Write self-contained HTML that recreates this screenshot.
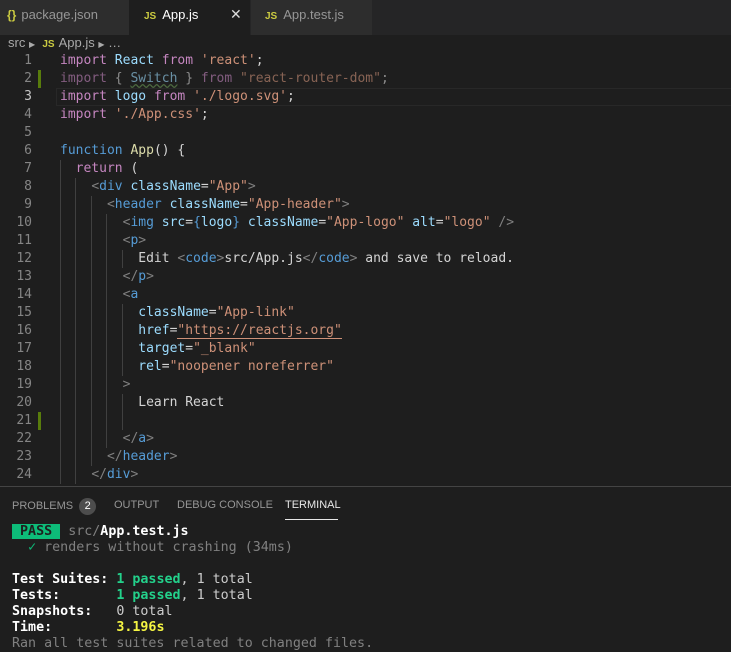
<!DOCTYPE html>
<html><head><style>
body{margin:0;width:731px;height:647px;background:#1e1e1e;overflow:hidden;position:relative;font-family:"Liberation Sans",sans-serif}
.tabs{position:absolute;left:0;top:0;width:731px;height:35px;background:#252526}
.tab{position:absolute;top:0;height:35px;background:#2d2d2d;color:#969696;font-size:13px;line-height:29px;box-sizing:border-box}
.js{color:#cbcb41;font-weight:bold;font-size:10px;margin-right:6px}
.bc{position:absolute;top:34px;left:8px;font-size:13px;color:#a9a9a9;line-height:18px}
.ln{position:absolute;left:0;width:32px;text-align:right;color:#858585;font:13px/18px "DejaVu Sans Mono",monospace}
.cd{position:absolute;left:60px;white-space:pre;color:#d4d4d4;font:13px/18px "DejaVu Sans Mono",monospace}
.k{color:#c586c0}.b{color:#569cd6}.v{color:#9cdcfe}.s{color:#ce9178}.g{color:#808080}.f{color:#dcdcaa}
.gd{position:absolute;width:1px;background:#404040}
.panel{position:absolute;left:0;top:486px;width:731px;height:161px;border-top:1px solid #444}
.pt{position:absolute;top:11px;font-size:11px;color:#969696}
.t{position:absolute;left:12px;white-space:pre;color:#cccccc;font:13.33px/16px "DejaVu Sans Mono",monospace}
.gr{color:#23d18b;font-weight:bold}
</style></head><body>
<div class="tabs">
<div class="tab" style="left:0;width:129px;padding-left:7px"><span style="color:#cbcb41;font-weight:bold;font-size:12px;margin-right:5px">{}</span>package.json</div>
<div class="tab" style="left:129px;width:121px;background:#1e1e1e;color:#fff;padding-left:15px"><span class="js">JS</span>App.js<span style="position:absolute;left:101px;color:#ddd;font-size:14px">✕</span></div>
<div class="tab" style="left:251px;width:121px;padding-left:14px"><span class="js">JS</span>App.test.js</div>
</div>
<div class="bc">src <span style="font-size:8px">▶</span> &nbsp;<span class="js" style="margin-right:4px">JS</span>App.js <span style="font-size:8px">▶</span> …</div>
<div class="gd" style="left:60px;top:160px;height:324px"></div>
<div class="gd" style="left:75px;top:178px;height:306px"></div>
<div class="gd" style="left:91px;top:196px;height:270px"></div>
<div class="gd" style="left:106px;top:214px;height:234px"></div>
<div class="gd" style="left:122px;top:250px;height:18px"></div>
<div class="gd" style="left:122px;top:304px;height:72px"></div>
<div class="gd" style="left:122px;top:394px;height:36px"></div>
<div style="position:absolute;left:38px;top:70px;width:3px;height:18px;background:#587c0c"></div>
<div style="position:absolute;left:38px;top:412px;width:3px;height:18px;background:#587c0c"></div>
<div style="position:absolute;left:56px;top:88px;width:675px;height:16px;border:1px solid #282828"></div>
<div class="ln" style="top:52px">1</div><div class="cd" style="top:52px"><span class="k">import</span> <span class="v">React</span> <span class="k">from</span> <span class="s">'react'</span>;</div>
<div class="ln" style="top:70px">2</div><div class="cd" style="top:70px;opacity:.6"><span class="k">import</span> { <span class="v" style="text-decoration:underline wavy #6a9955">Switch</span> } <span class="k">from</span> <span class="s">"react-router-dom"</span>;</div>
<div class="ln" style="top:88px;color:#c6c6c6">3</div><div class="cd" style="top:88px"><span class="k">import</span> <span class="v">logo</span> <span class="k">from</span> <span class="s">'./logo.svg'</span>;</div>
<div class="ln" style="top:106px">4</div><div class="cd" style="top:106px"><span class="k">import</span> <span class="s">'./App.css'</span>;</div>
<div class="ln" style="top:124px">5</div>
<div class="ln" style="top:142px">6</div><div class="cd" style="top:142px"><span class="b">function</span> <span class="f">App</span>() {</div>
<div class="ln" style="top:160px">7</div><div class="cd" style="top:160px">  <span class="k">return</span> (</div>
<div class="ln" style="top:178px">8</div><div class="cd" style="top:178px">    <span class="g">&lt;</span><span class="b">div</span> <span class="v">className</span>=<span class="s">"App"</span><span class="g">&gt;</span></div>
<div class="ln" style="top:196px">9</div><div class="cd" style="top:196px">      <span class="g">&lt;</span><span class="b">header</span> <span class="v">className</span>=<span class="s">"App-header"</span><span class="g">&gt;</span></div>
<div class="ln" style="top:214px">10</div><div class="cd" style="top:214px">        <span class="g">&lt;</span><span class="b">img</span> <span class="v">src</span>=<span class="b">{</span><span class="v">logo</span><span class="b">}</span> <span class="v">className</span>=<span class="s">"App-logo"</span> <span class="v">alt</span>=<span class="s">"logo"</span> <span class="g">/&gt;</span></div>
<div class="ln" style="top:232px">11</div><div class="cd" style="top:232px">        <span class="g">&lt;</span><span class="b">p</span><span class="g">&gt;</span></div>
<div class="ln" style="top:250px">12</div><div class="cd" style="top:250px">          Edit <span class="g">&lt;</span><span class="b">code</span><span class="g">&gt;</span>src/App.js<span class="g">&lt;/</span><span class="b">code</span><span class="g">&gt;</span> and save to reload.</div>
<div class="ln" style="top:268px">13</div><div class="cd" style="top:268px">        <span class="g">&lt;/</span><span class="b">p</span><span class="g">&gt;</span></div>
<div class="ln" style="top:286px">14</div><div class="cd" style="top:286px">        <span class="g">&lt;</span><span class="b">a</span></div>
<div class="ln" style="top:304px">15</div><div class="cd" style="top:304px">          <span class="v">className</span>=<span class="s">"App-link"</span></div>
<div class="ln" style="top:322px">16</div><div class="cd" style="top:322px">          <span class="v">href</span>=<span class="s" style="border-bottom:1px solid #ce9178">"https://reactjs.org"</span></div>
<div class="ln" style="top:340px">17</div><div class="cd" style="top:340px">          <span class="v">target</span>=<span class="s">"_blank"</span></div>
<div class="ln" style="top:358px">18</div><div class="cd" style="top:358px">          <span class="v">rel</span>=<span class="s">"noopener noreferrer"</span></div>
<div class="ln" style="top:376px">19</div><div class="cd" style="top:376px">        <span class="g">&gt;</span></div>
<div class="ln" style="top:394px">20</div><div class="cd" style="top:394px">          Learn React</div>
<div class="ln" style="top:412px">21</div>
<div class="ln" style="top:430px">22</div><div class="cd" style="top:430px">        <span class="g">&lt;/</span><span class="b">a</span><span class="g">&gt;</span></div>
<div class="ln" style="top:448px">23</div><div class="cd" style="top:448px">      <span class="g">&lt;/</span><span class="b">header</span><span class="g">&gt;</span></div>
<div class="ln" style="top:466px">24</div><div class="cd" style="top:466px">    <span class="g">&lt;/</span><span class="b">div</span><span class="g">&gt;</span></div>
<div class="panel">
<div class="pt" style="left:12px">PROBLEMS <span style="display:inline-block;background:#4d4d4d;color:#fff;border-radius:9px;width:17px;height:17px;text-align:center;line-height:17px;margin-left:3px">2</span></div>
<div class="pt" style="left:114px;top:12px">OUTPUT</div>
<div class="pt" style="left:177px;top:12px">DEBUG CONSOLE</div>
<div class="pt" style="left:285px;top:12px;color:#e7e7e7">TERMINAL</div>
<div style="position:absolute;left:285px;top:32px;width:53px;height:1px;background:#e7e7e7"></div>
<div class="t" style="top:37px"><span style="background:#0dbc79;color:#1e1e1e;font-weight:bold"> PASS </span> <span style="color:#808080">src/</span><b style="color:#fff">App.test.js</b></div>
<div class="t" style="top:53px;color:#808080">  <span style="color:#0dbc79">✓</span> renders without crashing (34ms)</div>
<div class="t" style="top:85px"><b style="color:#fff">Test Suites: </b><span class="gr">1 passed</span>, 1 total</div>
<div class="t" style="top:101px"><b style="color:#fff">Tests:       </b><span class="gr">1 passed</span>, 1 total</div>
<div class="t" style="top:117px"><b style="color:#fff">Snapshots:   </b>0 total</div>
<div class="t" style="top:133px"><b style="color:#fff">Time:        </b><b style="color:#f5f543">3.196s</b></div>
<div class="t" style="top:149px;color:#808080">Ran all test suites related to changed files.</div>
</div>
</body></html>
